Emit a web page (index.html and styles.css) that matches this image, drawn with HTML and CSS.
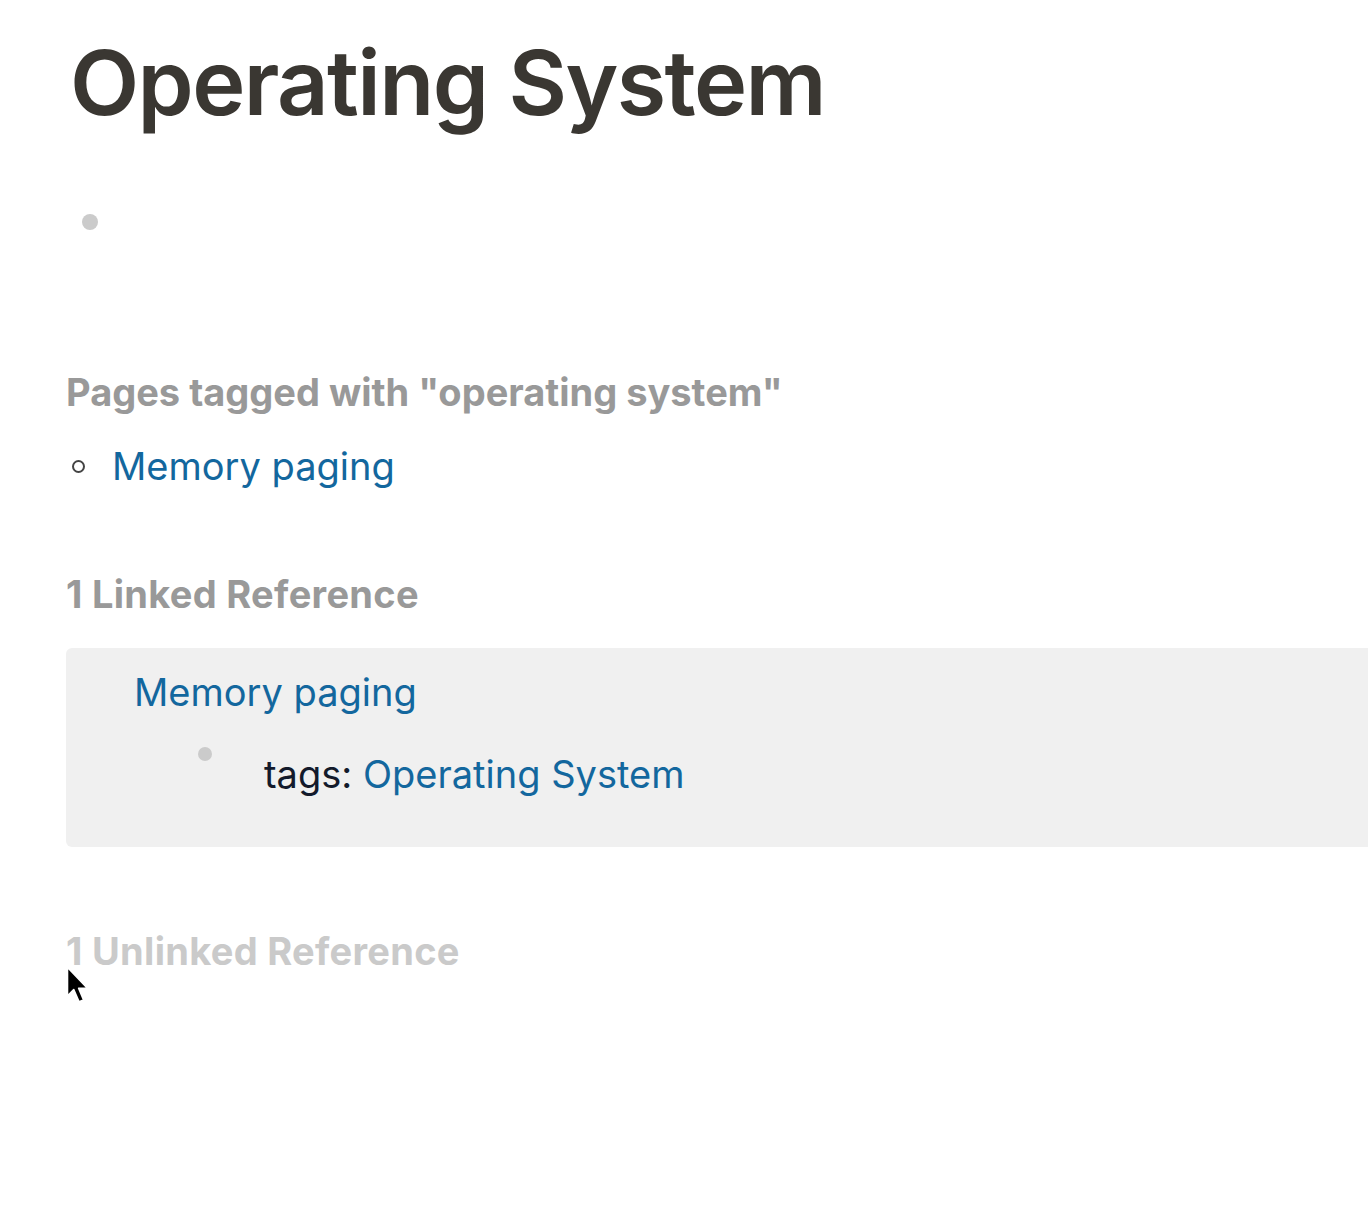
FILE: index.html
```html
<!DOCTYPE html>
<html lang="en">
  <head>
    <title>Operating System</title>
    <link rel="stylesheet" href="styles.css">
  </head>
  <body>
    <div class="page">
      <h1 class="page-title">Operating System</h1>

      <div class="block empty">
        <span class="bullet"></span>
      </div>

      <section class="tagged">
        <h2 class="section-title tight">Pages tagged with "operating system"</h2>
        <ul class="tag-list">
          <li><a href="#">Memory paging</a></li>
        </ul>
      </section>

      <section class="references">
        <h2 class="section-title">1 Linked Reference</h2>
        <div class="ref-card">
          <a class="ref-page" href="#">Memory paging</a>
          <div class="ref-block">
            <span class="bullet small"></span>
            <span class="ref-text">tags: <a href="#">Operating System</a></span>
          </div>
        </div>
      </section>

      <section class="unlinked">
        <h2 class="section-title faded">1 Unlinked Reference</h2>
        <!-- mouse pointer hovering the heading -->
        <svg class="mouse-arrow" width="28" height="44" viewBox="0 0 24 38">
          <polygon points="2,1 2,26 7.5,20.5 12,31 16,29.3 11.8,19.3 19.5,19.3" fill="#000" stroke="#fff" stroke-width="1.5" stroke-linejoin="round"></polygon>
        </svg>
      </section>
    </div>
  </body>
</html>
```

FILE: styles.css
```css
body {
  margin: 0;
  background: #fff;
  font-family: Inter, "Noto Sans", sans-serif;
}

.page {
  padding: 18px 0 0 66px;
}

.page-title {
  margin: 0 0 0 4px;
  font-size: 90px;
  font-weight: 600;
  color: #3a3732;
  letter-spacing: -1.6px;
  line-height: 130px;
}

.block.empty {
  height: 156px;
  padding: 66px 0 0 16px;
}

.bullet {
  display: block;
  width: 16px;
  height: 16px;
  border-radius: 50%;
  background: #cbcbcb;
}

.bullet.small {
  width: 14px;
  height: 14px;
  flex-shrink: 0;
}

.section-title {
  margin: 0;
  font-size: 38px;
  font-weight: 700;
  color: #999;
  line-height: 44px;
  letter-spacing: 0.3px;
}

.section-title.tight {
  letter-spacing: 0;
}

.section-title.faded {
  color: #cacaca;
}

.tag-list {
  list-style: none;
  margin: 28px 0 0;
  padding: 0;
}

.tag-list li {
  display: flex;
  align-items: center;
  font-size: 38px;
  line-height: 48px;
}

.tag-list li::before {
  content: "";
  width: 9px;
  height: 9px;
  border: 2px solid #444;
  border-radius: 50%;
  margin: 0 27px 0 6px;
}

a {
  color: #13679e;
  text-decoration: none;
}

.references {
  margin-top: 82px;
}

.ref-card {
  margin-top: 32px;
  height: 199px;
  box-sizing: border-box;
  padding: 20px 0 0 68px;
  background: #f0f0f0;
  border-radius: 6px 0 0 6px;
}

.ref-page {
  display: block;
  font-size: 38px;
  line-height: 48px;
}

.ref-block {
  display: flex;
  align-items: flex-start;
  margin: 31px 0 0 64px;
}

.ref-text {
  margin: 3px 0 0 52px;
  font-size: 38px;
  line-height: 48px;
  color: #131a2b;
}

.unlinked {
  position: relative;
  margin-top: 82px;
  height: 120px;
}

.mouse-arrow {
  display: block;
  position: absolute;
  left: -1px;
  top: 37px;
}
```
